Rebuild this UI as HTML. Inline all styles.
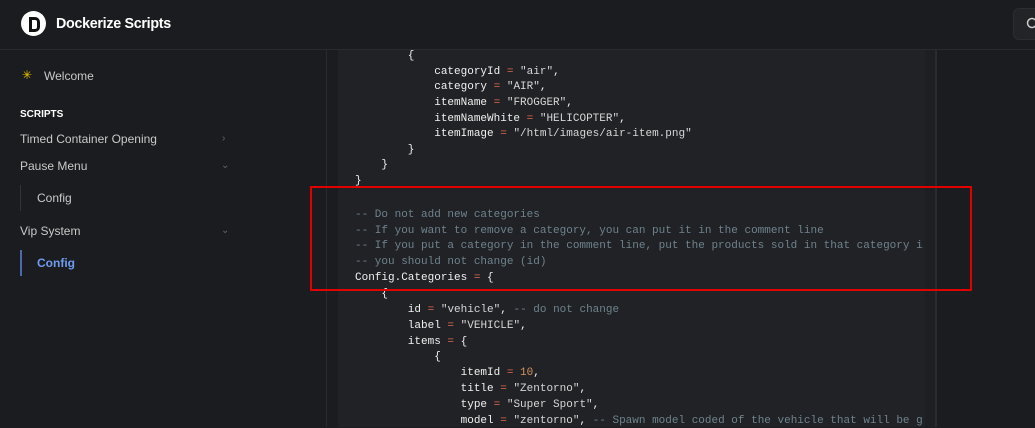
<!DOCTYPE html><html><head><style>
*{margin:0;padding:0;box-sizing:border-box}
body{width:1035px;height:427px;overflow:hidden;background:#1b1c1f;font-family:"Liberation Sans",sans-serif;position:relative;color:#d6d6d6}
.hdr{position:absolute;left:0;top:0;width:1035px;height:50px;border-bottom:1px solid #2a2b2f;background:#1b1c1f}
.logo{position:absolute;left:21px;top:11px;width:25px;height:25px;border-radius:50%;background:#fff}
.logo:after{content:"";position:absolute;left:8px;top:6px;width:5px;height:9px;border:3px solid #111;border-radius:0 5px 5px 0;background:#fff}
.title{position:absolute;left:56px;top:16px;font-size:14.3px;font-weight:bold;color:#fff;letter-spacing:-0.3px}
.search{position:absolute;left:1013px;top:8px;width:40px;height:32px;border-radius:6px;background:#232428;border:1px solid #2c2d31}
.side{position:absolute;left:326px;top:50px;width:1px;height:377px;background:#2a2b2f}
.nav{position:absolute;font-size:12px;color:#c9c9c9}
.chev{position:absolute;font-size:10px;color:#666}
.code{position:absolute;left:338px;top:50px;width:587px;height:377px;background:#202226}
.strip{position:absolute;left:925px;top:50px;width:10px;height:377px;background:#1e1f23}
.vl{position:absolute;left:935px;top:50px;width:2px;height:377px;background:#2a2b2f}
.l{position:absolute;left:355px;font-family:"Liberation Mono",monospace;font-size:11px;color:#f0f0f0;white-space:pre;line-height:14px}
.o{color:#e0664f}.s{color:#d6d6d6}.c{color:#6f828d}.n{color:#d2955c}
.red{position:absolute;left:310px;top:186px;width:662px;height:105px;border:2px solid #e00000}
</style></head><body>
<div class="hdr"><div class="logo"></div><div class="title">Dockerize Scripts</div><div class="search"><svg width="14" height="14" style="position:absolute;left:12px;top:8px"><circle cx="6" cy="6" r="4.5" stroke="#ccc" stroke-width="1.5" fill="none"/></svg></div></div>
<div class="side"></div>
<div class="nav" style="left:22px;top:68px;color:#e8c200;font-size:12px">✳</div>
<div class="nav" style="left:44px;top:69px">Welcome</div>
<div class="nav" style="left:20px;top:109px;font-size:10px;font-weight:bold;color:#fff">SCRIPTS</div>
<div class="nav" style="left:20px;top:132px">Timed Container Opening</div><div class="chev" style="left:222px;top:133px">›</div>
<div class="nav" style="left:20px;top:159px">Pause Menu</div><div class="chev" style="left:221px;top:160px">⌄</div>
<div style="position:absolute;left:20px;top:185px;width:1px;height:26px;background:#333"></div>
<div class="nav" style="left:37px;top:191px">Config</div>
<div class="nav" style="left:20px;top:224px">Vip System</div><div class="chev" style="left:221px;top:225px">⌄</div>
<div style="position:absolute;left:20px;top:250px;width:2px;height:26px;background:#4d6aa8"></div>
<div class="nav" style="left:37px;top:256px;color:#6f9cf0;font-weight:bold">Config</div>
<div class="code"></div><div class="strip"></div><div class="vl"></div>
<div class="l" style="top:49px">        {</div>
<div class="l" style="top:65px">            categoryId <span class="o">=</span> <span class="s">"air"</span>,</div>
<div class="l" style="top:80px">            category <span class="o">=</span> <span class="s">"AIR"</span>,</div>
<div class="l" style="top:96px">            itemName <span class="o">=</span> <span class="s">"FROGGER"</span>,</div>
<div class="l" style="top:112px">            itemNameWhite <span class="o">=</span> <span class="s">"HELICOPTER"</span>,</div>
<div class="l" style="top:127px">            itemImage <span class="o">=</span> <span class="s">"/html/images/air-item.png"</span></div>
<div class="l" style="top:143px">        }</div>
<div class="l" style="top:158px">    }</div>
<div class="l" style="top:174px">}</div>
<div class="l c" style="top:208px">-- Do not add new categories</div>
<div class="l c" style="top:224px">-- If you want to remove a category, you can put it in the comment line</div>
<div class="l c" style="top:239px">-- If you put a category in the comment line, put the products sold in that category i</div>
<div class="l c" style="top:255px">-- you should not change (id)</div>
<div class="l" style="top:271px">Config.Categories <span class="o">=</span> {</div>
<div class="l" style="top:287px">    {</div>
<div class="l" style="top:303px">        id <span class="o">=</span> <span class="s">"vehicle"</span>, <span class="c">-- do not change</span></div>
<div class="l" style="top:319px">        label <span class="o">=</span> <span class="s">"VEHICLE"</span>,</div>
<div class="l" style="top:335px">        items <span class="o">=</span> {</div>
<div class="l" style="top:350px">            {</div>
<div class="l" style="top:366px">                itemId <span class="o">=</span> <span class="n">10</span>,</div>
<div class="l" style="top:382px">                title <span class="o">=</span> <span class="s">"Zentorno"</span>,</div>
<div class="l" style="top:398px">                type <span class="o">=</span> <span class="s">"Super Sport"</span>,</div>
<div class="l" style="top:414px">                model <span class="o">=</span> <span class="s">"zentorno"</span>, <span class="c">-- Spawn model coded of the vehicle that will be g</span></div>
<div class="red"></div>
</body></html>
